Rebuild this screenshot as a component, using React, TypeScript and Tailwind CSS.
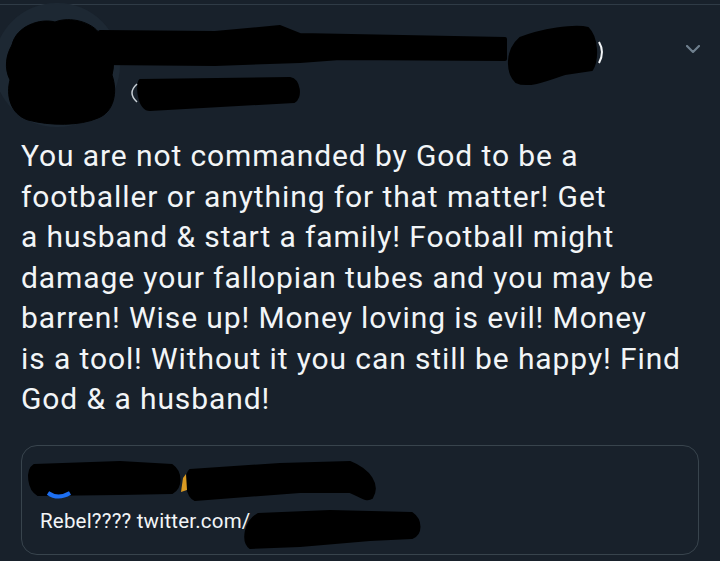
const font = { fontFamily: 'Roboto, "Noto Sans", sans-serif' };

function Scribbles() {
  // black marker over names / handles
  return (
    <svg className="pointer-events-none absolute inset-0" width="720" height="561" viewBox="0 0 720 561">
      <g fill="#000" stroke="#000" strokeLinecap="round" strokeLinejoin="round">
        {/* avatar blob */}
        <path d="M12 45 C16 26 40 18 55 22 C70 16 92 22 100 34 C112 40 116 60 112 75 C118 92 114 112 98 118 C80 126 50 126 28 120 C10 114 6 95 10 80 C4 68 6 55 12 45 Z" />
        {/* long name bar */}
        <path d="M100 32 L215 33 L280 27 L300 35 L505 39 L505 59 L340 58 L300 61 L215 64 L100 63 Z" strokeWidth="4" />
        <path d="M520 38 C540 30 575 24 588 28 C598 38 598 60 592 70 L565 74 C548 80 528 88 516 82 C506 72 506 50 520 38 Z" strokeWidth="2" />
        {/* handle bar */}
        <path d="M140 80 L290 78 C300 80 302 98 294 102 L150 110 C138 110 136 84 140 80 Z" strokeWidth="2" />
        {/* quoted tweet header */}
        <path d="M34 465 L120 462 L172 465 C182 472 182 488 172 493 L120 494 L38 495 C28 490 26 470 34 465 Z" strokeWidth="2" />
        <path d="M190 470 L280 464 L350 462 C370 470 380 485 372 498 C366 502 360 496 350 492 L300 492 L195 500 C186 496 184 476 190 470 Z" strokeWidth="2" />
        {/* quoted link */}
        <path d="M258 514 L330 511 L412 513 C422 520 422 534 412 538 L370 540 L300 546 L250 548 C242 542 244 522 258 514 Z" strokeWidth="2" />
      </g>
      <path d="M48 493 Q58 500 70 493" stroke="#1d6ff2" strokeWidth="4" fill="none" />
      <path d="M183 478 L186 474 L187 490 L181 492 Z" fill="#d99a22" />
      <path d="M599 42 Q605 52 599 63" stroke="#f2f5f7" strokeWidth="2" fill="none" />
      <path d="M137 84 Q127 93 137 102" stroke="#c8d0d6" strokeWidth="1.5" fill="none" />
    </svg>
  );
}

export default function App() {
  return (
    <div className="relative h-[561px] w-[720px] overflow-hidden bg-[#18212b] text-[#f2f5f7]" style={font}>
      <div className="h-[4px]" />
      <div className="h-px bg-[#2f3b46]" />

      {/* header */}
      <div className="flex h-[131px] items-start">
        <div className="ml-[-6px] mt-[-2px] h-[124px] w-[126px] rounded-full bg-[#1d2833]" />
        <div className="flex-1" />
        <svg className="mr-[20px] mt-[40px]" width="14" height="8" viewBox="0 0 14 8">
          <path d="M1 1 L7 7 L13 1" stroke="#6e7f8d" strokeWidth="2.2" fill="none" strokeLinecap="round" strokeLinejoin="round" />
        </svg>
      </div>

      {/* tweet text */}
      <p className="px-[21px] text-[30px] leading-[40.5px] tracking-[0.9px]">
        You are not commanded by God to be a<br />
        footballer or anything for that matter! Get<br />
        a husband &amp; start a family! Football might<br />
        damage your fallopian tubes and you may be<br />
        barren! Wise up! Money loving is evil! Money<br />
        is a tool! Without it you can still be happy! Find<br />
        God &amp; a husband!
      </p>

      {/* quoted tweet card */}
      <div className="mx-[21px] mt-[25px] h-[110px] rounded-[16px] border border-[#38444d] px-[18px] pt-[62px]">
        <div className="text-[20.5px] leading-[26px] tracking-[0.2px]">Rebel???? twitter.com/</div>
      </div>

      <Scribbles />
    </div>
  );
}
